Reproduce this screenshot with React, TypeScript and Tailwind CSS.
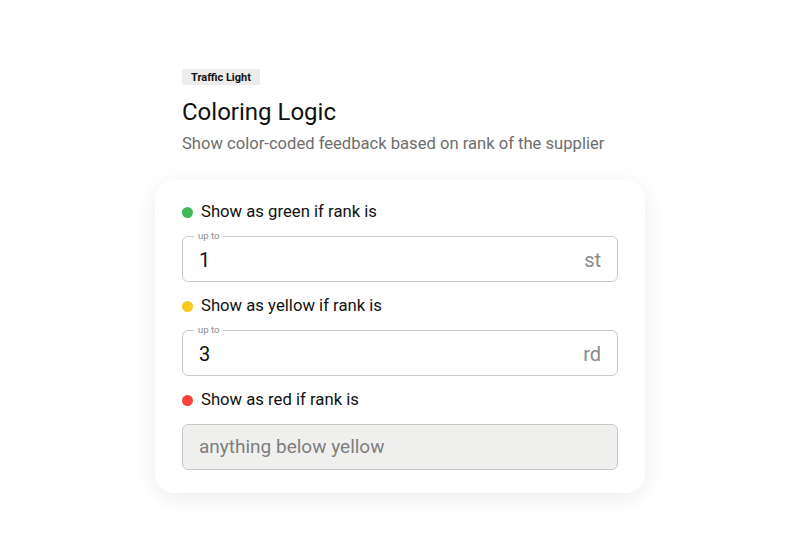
export default function App() {
  const rows = [
    { color: "bg-[#3dba55]", label: "Show as green if rank is", value: "1", suffix: "st" },
    { color: "bg-[#f8c81c]", label: "Show as yellow if rank is", value: "3", suffix: "rd" },
  ];

  return (
    <div className="min-h-[546px] w-[800px] bg-white font-['Roboto',sans-serif] text-[#111]">
      <div className="pl-[182px] pt-[69px]">
        <div className="flex h-[16px] w-[78px] items-center justify-center rounded-[2px] bg-[#ececec] text-[11px] font-bold leading-none">
          Traffic Light
        </div>
        <h1 className="mt-[13px] text-[24px] leading-[28px] font-normal">Coloring Logic</h1>
        <p className="mt-[8px] text-[16.6px] leading-[19px] text-[#6e6e6e]">
          Show color-coded feedback based on rank of the supplier
        </p>
      </div>

      <div className="ml-[155px] mt-[27px] w-[490px] rounded-[20px] bg-white px-[27px] pt-[22px] pb-[23px] shadow-[0_5px_22px_rgba(0,0,0,0.08)]">
        {rows.map((r) => (
          <div key={r.label} className="mb-[14px]">
            <div className="flex h-[20px] items-center gap-[8px] text-[16.7px]">
              <span className={`h-[11px] w-[11px] rounded-full ${r.color}`} />
              {r.label}
            </div>
            <div className="relative mt-[14px] flex h-[46px] items-center justify-between rounded-[6px] border border-[#c9c9c9] pl-[16px] pr-[16px] pt-[1px]">
              <span className="absolute -top-[7px] left-[11px] bg-white px-[4px] text-[9.5px] leading-[12px] text-[#8a8a8a]">
                up to
              </span>
              <span className="text-[20px]">{r.value}</span>
              <span className="text-[20px] text-[#8a8a8a]">{r.suffix}</span>
            </div>
          </div>
        ))}
        <div>
          <div className="flex h-[20px] items-center gap-[8px] text-[16.7px]">
            <span className="h-[11px] w-[11px] rounded-full bg-[#f8433f]" />
            Show as red if rank is
          </div>
          <div className="mt-[14px] flex h-[46px] items-center rounded-[6px] border border-[#c9c9c9] bg-[#eff0ee] pl-[16px] text-[19px] text-[#7e7e7e]">
            anything below yellow
          </div>
        </div>
      </div>
    </div>
  );
}
